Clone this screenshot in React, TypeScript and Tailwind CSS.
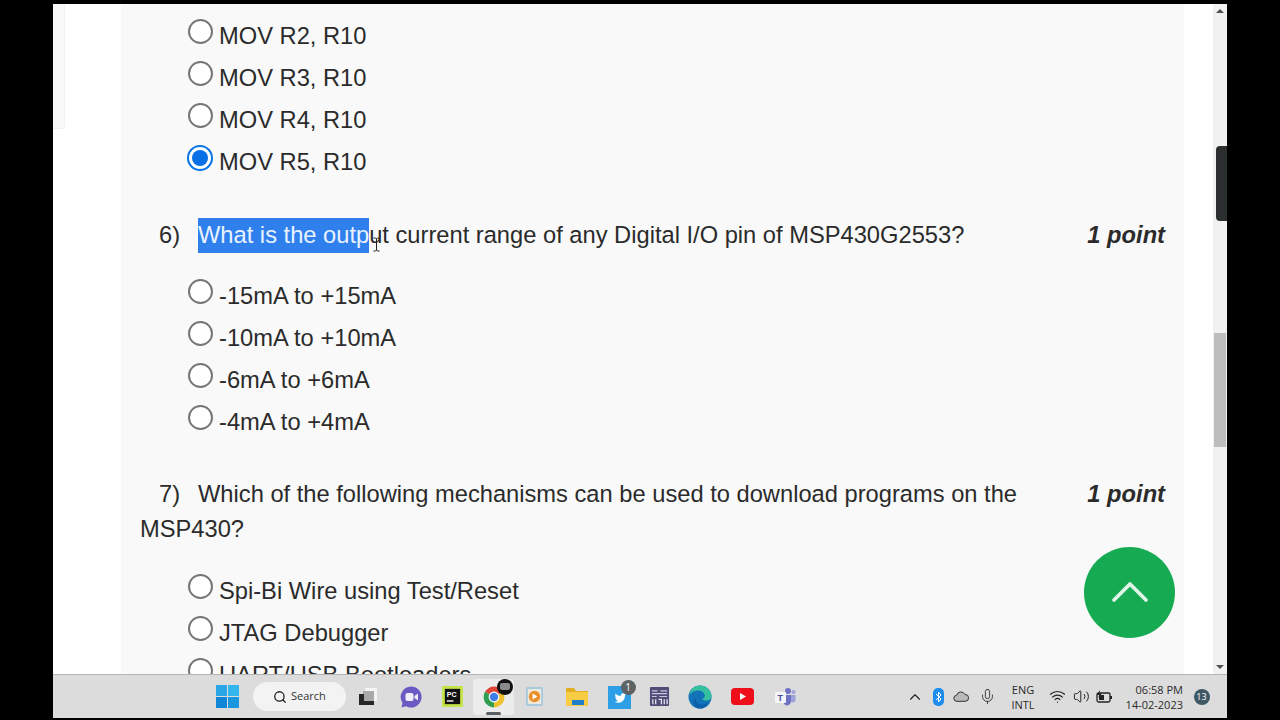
import { ChevronUp, Mic, Search, Volume2, Wifi } from "lucide-react";

function Radio({ checked }: { checked?: boolean }) {
	if (checked) {
		return (
			<div className="w-[26px] h-[26px] rounded-full border-2 border-[#0a74e8] bg-white flex items-center justify-center shrink-0 -ml-[1px] -mr-[0px] mt-[4px]">
				<div className="w-[16px] h-[16px] rounded-full bg-[#0a6fe6]" />
			</div>
		);
	}
	return <div className="w-[25px] h-[25px] rounded-full border-2 border-[#767676] bg-white shrink-0 mt-[4px]" />;
}

function Option({ label, checked }: { label: string; checked?: boolean }) {
	return (
		<div className="h-[42px] flex items-start gap-[6px] pl-[67px] whitespace-nowrap">
			<Radio checked={checked} />
			<span className="leading-[42px]">{label}</span>
		</div>
	);
}

function Question({ num, children }: { num: string; children: React.ReactNode }) {
	return (
		<div className="leading-[35px]">
			<span className="float-right font-bold italic">1 point</span>
			<span className="inline-block w-[58px] pl-[19px]">{num}</span>
			{children}
		</div>
	);
}

function WindowsLogo() {
	return (
		<svg viewBox="0 0 23 23" className="w-[23px] h-[23px]">
			<rect x="0" y="0" width="11" height="11" fill="#2aa5e6" />
			<rect x="12" y="0" width="11" height="11" fill="#33b5ee" />
			<rect x="0" y="12" width="11" height="11" fill="#0f86d6" />
			<rect x="12" y="12" width="11" height="11" fill="#1a96de" />
		</svg>
	);
}

function TaskView() {
	return (
		<svg viewBox="0 0 20 20" className="w-[20px] h-[20px]">
			<rect x="7" y="1" width="12" height="13" fill="#f4f4f4" />
			<rect x="5" y="4" width="11" height="11" fill="#a9a9a9" />
			<path d="M1 7h5v7h10v4H1z" fill="#262626" />
		</svg>
	);
}

function MeetIcon() {
	return (
		<svg viewBox="0 0 24 24" className="w-[24px] h-[24px]">
			<path d="M12 1.500a10.500 10.500 0 1 1-5 19.700l-4.500 1.300 1-4.600A10.500 10.500 0 0 1 12 1.500z" fill="#6a5bc4" />
			<rect x="6.500" y="8" width="8" height="8" rx="2" fill="#f1eefc" />
			<path d="M15.500 11l3.500-2.500v7L15.500 13z" fill="#f1eefc" />
		</svg>
	);
}

function PyCharm() {
	return (
		<svg viewBox="0 0 22 22" className="w-[21px] h-[21px]">
			<rect x="0" y="0" width="22" height="22" fill="#c5e34a" />
			<rect x="3" y="3" width="16" height="16" fill="#111" />
			<text x="5" y="11" fontSize="7.500" fontWeight="700" fill="#fff" fontFamily="Liberation Sans, sans-serif">PC</text>
			<rect x="5" y="15" width="7" height="1.400" fill="#fff" />
		</svg>
	);
}

function Chrome() {
	return (
		<svg viewBox="0 0 24 24" className="w-[24px] h-[24px]">
			<path d="M12 12L3 6.800A10.500 10.500 0 0 1 21.100 6.800z" fill="#df4437" />
			<path d="M12 12L21.100 6.800A10.500 10.500 0 0 1 12 22.500z" fill="#efc12f" />
			<path d="M12 12L12 22.500A10.500 10.500 0 0 1 3 6.800z" fill="#2f9e4f" />
			<circle cx="12" cy="12" r="5.400" fill="#fff" />
			<circle cx="12" cy="12" r="4.200" fill="#3d7fe6" />
		</svg>
	);
}

function PlayerIcon() {
	return (
		<svg viewBox="0 0 20 22" className="w-[19px] h-[21px]">
			<rect x="1" y="1" width="18" height="20" rx="2" fill="#a9c9de" />
			<rect x="3" y="3" width="14" height="16" rx="1" fill="#efe9dc" />
			<circle cx="10" cy="11" r="6" fill="#ea8f2d" />
			<path d="M8 7.800l5 3.200-5 3.200z" fill="#fff" />
		</svg>
	);
}

function FolderIcon() {
	return (
		<svg viewBox="0 0 24 22" className="w-[24px] h-[22px]">
			<path d="M1 2h8l2 3h12v15H1z" fill="#e2ae22" />
			<rect x="1" y="6" width="22" height="14" fill="#f8cd45" />
			<rect x="7" y="14" width="12" height="5" fill="#1f7fc9" />
		</svg>
	);
}

function Twitter() {
	return (
		<div className="relative w-[23px] h-[24px]">
			<svg viewBox="0 0 24 24" className="w-[23px] h-[23px] mt-[1px]">
				<rect width="24" height="24" fill="#2d9fe6" />
				<path
					d="M18 9.300c.6-.3 1-.8 1.300-1.300-.5.2-1 .4-1.500.4-.5-.6-1.200-.9-2-.9-1.500 0-2.700 1.300-2.600 2.900-2.200-.1-4.100-1.100-5.400-2.700-.7 1.200-.3 2.700.8 3.500-.4 0-.8-.1-1.200-.3 0 1.300.9 2.400 2.100 2.700-.4.100-.8.100-1.200 0 .3 1.100 1.300 1.800 2.500 1.900-1.100.8-2.500 1.200-3.900 1 3.500 2.200 10.700 1 10.800-6.900.2-.100.200-.200.300-.300z"
					fill="#fff"
				/>
			</svg>
			{/* notification count */}
			<div className="absolute -top-[5px] -right-[5px] w-[15px] h-[15px] rounded-full bg-[#5d6264] text-white text-[10px] leading-[15px] text-center font-['Open_Sans',sans-serif]">
				1
			</div>
		</div>
	);
}

function DesktopApp() {
	return (
		<svg viewBox="0 0 22 22" className="w-[21px] h-[21px]">
			<rect x="1" y="1" width="20" height="20" rx="1" fill="#4f4d78" />
			<path d="M3 5h6M12 5h7M3 8h16M3 11h5M11 11h8" stroke="#c9c8de" strokeWidth="1.300" />
			<path d="M4 14v5M7 14v5M10 14h3v5M16 14v5M19 14v5" stroke="#dfdeea" strokeWidth="1.400" fill="none" />
		</svg>
	);
}

function Edge() {
	return (
		<svg viewBox="0 0 24 24" className="w-[24px] h-[24px]">
			<circle cx="12" cy="12" r="11.500" fill="#1273b8" />
			<path d="M1 11C2 4.500 7 .5 12 .5c6.500 0 11.500 5 11.500 10.500 0 3-2.500 4.500-5 4.500-2.200 0-3.800-.8-4.500-1.800 2-.3 2.800-1.700 2.800-3 0-3-3-5.300-6.300-5.300C6 5.400 2.500 7.500 1 11z" fill="#35c1a0" />
			<path d="M7.500 13c0 4 3 6.500 6.500 6.500 2.500 0 4.500-.8 6-2.300-1.500 3.800-4.500 6.300-8 6.300-3.300 0-7-3.500-6.800-7.500.1-1.300 1-2.500 2.300-3z" fill="#0c5fa8" />
		</svg>
	);
}

function YouTube() {
	return (
		<svg viewBox="0 0 23 17" className="w-[23px] h-[17px]">
			<rect width="23" height="17" rx="4" fill="#ee0f1a" />
			<path d="M9 5l6 3.500-6 3.500z" fill="#fff" />
		</svg>
	);
}

function Teams() {
	return (
		<svg viewBox="0 0 22 20" className="w-[22px] h-[20px]">
			<circle cx="14" cy="4" r="3" fill="#6f72c4" />
			<circle cx="19.500" cy="5" r="2" fill="#9ea2dc" />
			<path d="M10 8h7v7a4 4 0 0 1-7 2z" fill="#6f72c4" />
			<path d="M17 8h4.500v5a2.500 2.500 0 0 1-4.500 1.500z" fill="#9ea2dc" />
			<rect x="1" y="5" width="11" height="11" rx="1" fill="#f4f4fa" />
			<text x="3.600" y="14" fontSize="9" fontWeight="700" fill="#4b4f9e" fontFamily="Liberation Sans, sans-serif">T</text>
		</svg>
	);
}

function Bluetooth() {
	return (
		<svg viewBox="0 0 11 18" className="w-[11px] h-[18px]">
			<rect width="11" height="18" rx="5" fill="#1b8cf0" />
			<path d="M3 6l5 5-2.500 3V4L8 7l-5 5" stroke="#fff" strokeWidth="1" fill="none" />
		</svg>
	);
}

function Cloud() {
	return (
		<svg viewBox="0 0 16 11" className="w-[16px] h-[11px]">
			<path d="M4 10.300a3 3 0 0 1-.4-6A4.500 4.500 0 0 1 12 3.500a3.400 3.400 0 0 1 .4 6.800z" fill="#b9b9b9" stroke="#333" strokeWidth="1" />
		</svg>
	);
}

function Battery() {
	return (
		<svg viewBox="0 0 18 14" className="w-[18px] h-[14px]">
			<rect x="2" y="3" width="13" height="9" rx="1.500" fill="none" stroke="#222" strokeWidth="1.300" />
			<rect x="4" y="5" width="5" height="5" fill="#222" />
			<rect x="15" y="6" width="2" height="3" fill="#222" />
			<path d="M5 0L2 5h2.500L3 8l4-4.500H4.500z" fill="#222" />
		</svg>
	);
}

const taskbarSlots = [
	{ w: "w-[43px]", icon: <TaskView /> },
	{ w: "w-[43px]", icon: <MeetIcon /> },
	{ w: "w-[41px]", icon: <PyCharm /> },
];

const taskbarSlotsRight = [
	{ w: "w-[41px]", icon: <PlayerIcon /> },
	{ w: "w-[43px]", icon: <FolderIcon /> },
	{ w: "w-[42px]", icon: <Twitter /> },
	{ w: "w-[38px]", icon: <DesktopApp /> },
	{ w: "w-[43px]", icon: <Edge /> },
	{ w: "w-[42px]", icon: <YouTube /> },
	{ w: "w-[43px]", icon: <Teams /> },
];

function Taskbar() {
	return (
		<div className="h-[44px] shrink-0 flex items-center bg-[#dcdcdc] border-t border-[#b4b4b4] text-[#2a2a2a] font-['Open_Sans',sans-serif]">
			<div className="ml-[163px] w-[23px] flex">
				<WindowsLogo />
			</div>
			<div className="ml-[14px] w-[93px] h-[29px] rounded-full bg-[#f3f3f3] flex items-center pl-[20px] gap-[4px] text-[11px] text-[#333]">
				<Search size={14} strokeWidth={2.200} className="text-[#222]" />
				<span>Search</span>
			</div>
			{taskbarSlots.map((s, i) => (
				<div key={i} className={`${s.w} flex justify-center`}>
					{s.icon}
				</div>
			))}
			<div className="w-[41px] h-[36px] relative flex items-center justify-center bg-[#ececec] rounded-[3px]">
				<Chrome />
				<div className="absolute top-[0px] right-[1px] w-[16px] h-[16px] rounded-full bg-[#111] flex items-center justify-center">
					<div className="w-[10px] h-[7px] rounded-[2px] bg-[#8a8a8a]" />
				</div>
				<div className="absolute bottom-[0px] left-[13px] w-[15px] h-[3px] rounded-full bg-[#5a5f63]" />
			</div>
			{taskbarSlotsRight.map((s, i) => (
				<div key={i} className={`${s.w} flex justify-center`}>
					{s.icon}
				</div>
			))}
			<div className="ml-auto flex items-center pr-[7px]">
				<div className="w-[24px] flex justify-center">
					<ChevronUp size={18} strokeWidth={1.500} className="text-[#222]" />
				</div>
				<div className="w-[22px] flex justify-center">
					<Bluetooth />
				</div>
				<div className="w-[24px] flex justify-center">
					<Cloud />
				</div>
				<div className="w-[28px] flex justify-center">
					<Mic size={17} strokeWidth={1.300} className="text-[#333]" />
				</div>
				<div className="w-[44px] text-center text-[11px] leading-[15px]">
					<div>ENG</div>
					<div>INTL</div>
				</div>
				<div className="w-[25px] flex justify-center">
					<Wifi size={17} strokeWidth={1.600} className="text-[#222]" />
				</div>
				<div className="w-[22px] flex justify-center">
					<Volume2 size={17} strokeWidth={1.400} className="text-[#222]" />
				</div>
				<div className="w-[24px] flex justify-center">
					<Battery />
				</div>
				<div className="w-[67px] text-right text-[11px] leading-[15px]">
					<div>06:58 PM</div>
					<div>14-02-2023</div>
				</div>
				<div className="w-[37px] flex justify-center">
					<div className="w-[16px] h-[16px] rounded-full bg-[#3f5866] text-white text-[9px] leading-[16px] text-center">13</div>
				</div>
			</div>
		</div>
	);
}

function Scrollbar() {
	return (
		<div className="w-[14px] shrink-0 bg-[#f1f1f1] flex flex-col items-center relative">
			<div className="mt-[5px] w-0 h-0 border-x-[4px] border-x-transparent border-b-[4px] border-b-[#505050]" />
			<div className="mt-[320px] w-[12px] h-[114px] bg-[#bdbdbd]" />
			<div className="mt-auto mb-[5px] w-0 h-0 border-x-[4px] border-x-transparent border-t-[4px] border-t-[#505050]" />
			{/* dark tab from the screen recorder lying over the bar */}
			<div className="absolute top-[142px] right-0 w-[11px] h-[75px] bg-[#2a2e2e] rounded-l-[4px]" />
		</div>
	);
}

export default function App() {
	return (
		<div className="w-[1280px] h-[720px] bg-black px-[53px] pt-[4px] pb-[2px] flex flex-col overflow-hidden font-['Liberation_Sans',sans-serif]">
			<div className="flex-1 min-h-0 flex bg-white relative overflow-hidden">
				<div className="w-[68px] shrink-0">
					<div className="w-[12px] h-[125px] bg-[#f9f9f9] rounded-br-[4px] border-r border-b border-[#f1f1f1]" />
				</div>
				<div className="flex-1 bg-[#f9f9f9] px-[19px] pt-[11px] text-[23.700px] text-[#2b2b2b]">
					<div className="-mx-[19px]">
						<Option label="MOV R2, R10" />
						<Option label="MOV R3, R10" />
						<Option label="MOV R4, R10" />
						<Option label="MOV R5, R10" checked />
					</div>
					<div className="mt-[35px]">
						<Question num="6)">
							<span className="inline-block h-[35px] bg-[#2f80ed] text-[#e8f2ff]">What is the outp</span>ut current range of any Digital I/O pin of MSP430G2553?
						</Question>
					</div>
					<div className="-mx-[19px] mt-[22px]">
						<Option label="-15mA to +15mA" />
						<Option label="-10mA to +10mA" />
						<Option label="-6mA to +6mA" />
						<Option label="-4mA to +4mA" />
					</div>
					<div className="mt-[34px]">
						<Question num="7)">Which of the following mechanisms can be used to download programs on the MSP430?</Question>
					</div>
					<div className="-mx-[19px] mt-[23px]">
						<Option label="Spi-Bi Wire using Test/Reset" />
						<Option label="JTAG Debugger" />
						<Option label="UART/USB Bootloaders" />
					</div>
				</div>
				<div className="w-[29px] shrink-0" />
				<Scrollbar />
				{/* back to top button */}
				<div className="absolute left-[1031px] top-[543px] w-[91px] h-[91px] rounded-full bg-[#16ab52] flex items-center justify-center">
					<ChevronUp size={64} strokeWidth={1.400} className="text-[#dff5e6] -mt-[2px]" />
				</div>
				{/* text cursor */}
				<svg viewBox="0 0 9 15" className="absolute left-[319px] top-[233px] w-[9px] h-[15px]">
					<path d="M1.500 1h2l1 1 1-1h2M4.500 2v11M1.500 14h2l1-1 1 1h2" stroke="#222" strokeWidth="1" fill="none" />
				</svg>
			</div>
			<Taskbar />
		</div>
	);
}
